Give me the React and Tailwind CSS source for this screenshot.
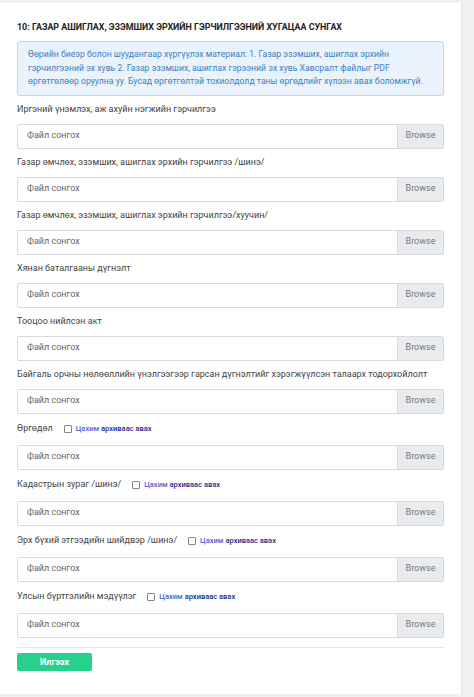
const fields = [
  { label: "Иргэний үнэмлэх, аж ахуйн нэгжийн гэрчилгээ" },
  { label: "Газар өмчлөх, эзэмших, ашиглах эрхийн гэрчилгээ /шинэ/" },
  { label: "Газар өмчлөх, эзэмших, ашиглах эрхийн гэрчилгээ/хуучин/" },
  { label: "Хянан баталгааны дүгнэлт" },
  { label: "Тооцоо нийлсэн акт" },
  { label: "Байгаль орчны нөлөөллийн үнэлгээгээр гарсан дүгнэлтийг хэрэгжүүлсэн талаарх тодорхойлолт" },
  { label: "Өргөдөл", archive: true },
  { label: "Кадастрын зураг /шинэ/", archive: true },
  { label: "Эрх бүхий этгээдийн шийдвэр /шинэ/", archive: true },
  { label: "Улсын бүртгэлийн мэдүүлэг", archive: true },
];

const FileField = ({ label, archive }) => (
  <div className="mt-[8px]">
    <div className={`flex items-center ${archive ? "h-[14px] mb-[9px]" : "h-[12px] mb-[8px]"}`}>
      <span className="text-[9px] text-[#444]">{label}</span>
      {archive && (
        <label className="flex items-center ml-[11px]">
          <span className="w-[8px] h-[8px] border border-[#888] rounded-[1px] bg-white mr-[4px]" />
          <span className="text-[7.5px] font-medium text-[#5a5ad0]">Цахим</span>
          <span className="text-[7.5px] font-medium text-[#252a96] ml-[2px]">архиваас авах</span>
        </label>
      )}
    </div>
    <div className="flex h-[25px] border border-[#d8dbde] rounded-[2px] bg-white overflow-hidden">
      <div className="flex-1 flex items-center pl-[9px] text-[9px] text-[#666]">Файл сонгох</div>
      <div className="w-[46px] flex items-center justify-center bg-[#e9ecef] border-l border-[#d8dbde] text-[9px] text-[#777]">
        Browse
      </div>
    </div>
  </div>
);

const App = () => {
  return (
    <div className="min-h-[697px] bg-[#eef0f2] pt-[3px]" style={{ fontFamily: "Roboto, 'Noto Sans', sans-serif" }}>
      <div className="w-[462px] bg-white border-r border-[#e3e5e8] px-[17px] pt-[18px] pb-[22px]">
        <h1 className="text-[8.9px] font-bold text-[#222] leading-[12px] uppercase">
          10: Газар ашиглах, эзэмших эрхийн гэрчилгээний хугацаа сунгах
        </h1>
        <div className="mt-[8px] bg-[#eaf3fc] border border-[#bcd9f1] rounded-[3px] pl-[10px] pr-[8px] py-[6px] text-[8.7px] leading-[13.5px] text-[#3d7fbf]">
          Өөрийн биеэр болон шуудангаар хүргүүлэх материал: 1. Газар эзэмших, ашиглах эрхийн гэрчилгээний эх хувь 2. Газар эзэмших, ашиглах гэрээний эх хувь Хавсралт файлыг PDF өргөтгөлөөр оруулна уу. Бусад өргөтгөлтэй тохиолдолд таны өргөдлийг хүлээн авах боломжгүй.
        </div>
        <div className="mt-[4px]">
          {fields.map((f, i) => (
            <FileField key={i} label={f.label} archive={f.archive} />
          ))}
        </div>
        <div className="mt-[9px] border-t border-[#e6e7e9]" />
        <button className="mt-[5px] w-[75px] h-[18px] bg-[#27d18b] rounded-[2px] text-white text-[9px] font-bold">
          Илгээх
        </button>
      </div>
    </div>
  );
};

export default App;
